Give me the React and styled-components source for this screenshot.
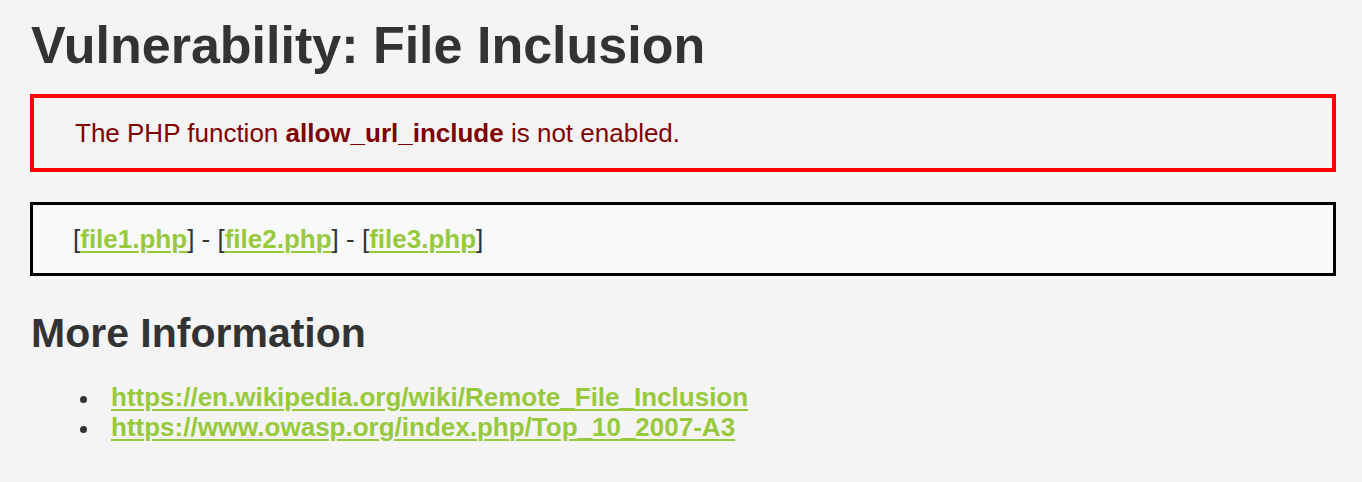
import React from "react";
import styled, { createGlobalStyle } from "styled-components";

const Global = createGlobalStyle`
  html, body { margin: 0; padding: 0; background: #f4f4f4; }
  body { font-family: "Liberation Sans", Arial, Helvetica, sans-serif; color: #333; }
`;

const Page = styled.div`
  padding: 13px 26px 20px 30px;
`;

const Title = styled.h1`
  margin: 0 0 0 1px;
  font-size: 52px;
  line-height: 64px;
  font-weight: bold;
  color: #333;
`;

const Box = styled.div`
  margin-top: ${(p) => p.$mt}px;
  border: ${(p) => p.$bw}px solid ${(p) => p.$border};
  background: ${(p) => p.$bg};
  height: ${(p) => p.$h}px;
  box-sizing: border-box;
  display: flex;
  align-items: center;
  padding-left: ${(p) => p.$pl}px;
  font-size: 26px;
  color: ${(p) => p.$color};
`;

const Link = styled.a`
  color: #98c93c;
  font-weight: bold;
  text-decoration: underline;
  text-decoration-thickness: 2px;
  text-underline-offset: 3px;
`;

const SubTitle = styled.h2`
  margin: 32px 0 0 1px;
  font-size: 41px;
  line-height: 50px;
  font-weight: bold;
  color: #333;
`;

const List = styled.ul`
  margin: 24px 0 0 0;
  padding-left: 81px;
  font-size: 26px;
  line-height: 30px;
  list-style: none;
`;

const Item = styled.li`
  &::before {
    content: "";
    display: inline-block;
    width: 7px;
    height: 7px;
    border-radius: 50%;
    background: #333;
    margin-left: -31px;
    margin-right: 24px;
    vertical-align: middle;
  }
`;

export default function App() {
  return (
    <>
      <Global />
      <Page>
        <Title>Vulnerability: File Inclusion</Title>
        <Box $mt={17} $bw={4} $border="#ff0000" $bg="#f4f4f4" $h={78} $pl={41} $color="#800000">
          <span>
            The PHP function <b>allow_url_include</b> is not enabled.
          </span>
        </Box>
        <Box $mt={30} $bw={3} $border="#000" $bg="#f8f9f9" $h={74} $pl={40} $color="#333">
          <span>
            [<Link href="#">file1.php</Link>] - [<Link href="#">file2.php</Link>] - [
            <Link href="#">file3.php</Link>]
          </span>
        </Box>
        <SubTitle>More Information</SubTitle>
        <List>
          <Item>
            <Link href="#">https://en.wikipedia.org/wiki/Remote_File_Inclusion</Link>
          </Item>
          <Item>
            <Link href="#">https://www.owasp.org/index.php/Top_10_2007-A3</Link>
          </Item>
        </List>
      </Page>
    </>
  );
}
